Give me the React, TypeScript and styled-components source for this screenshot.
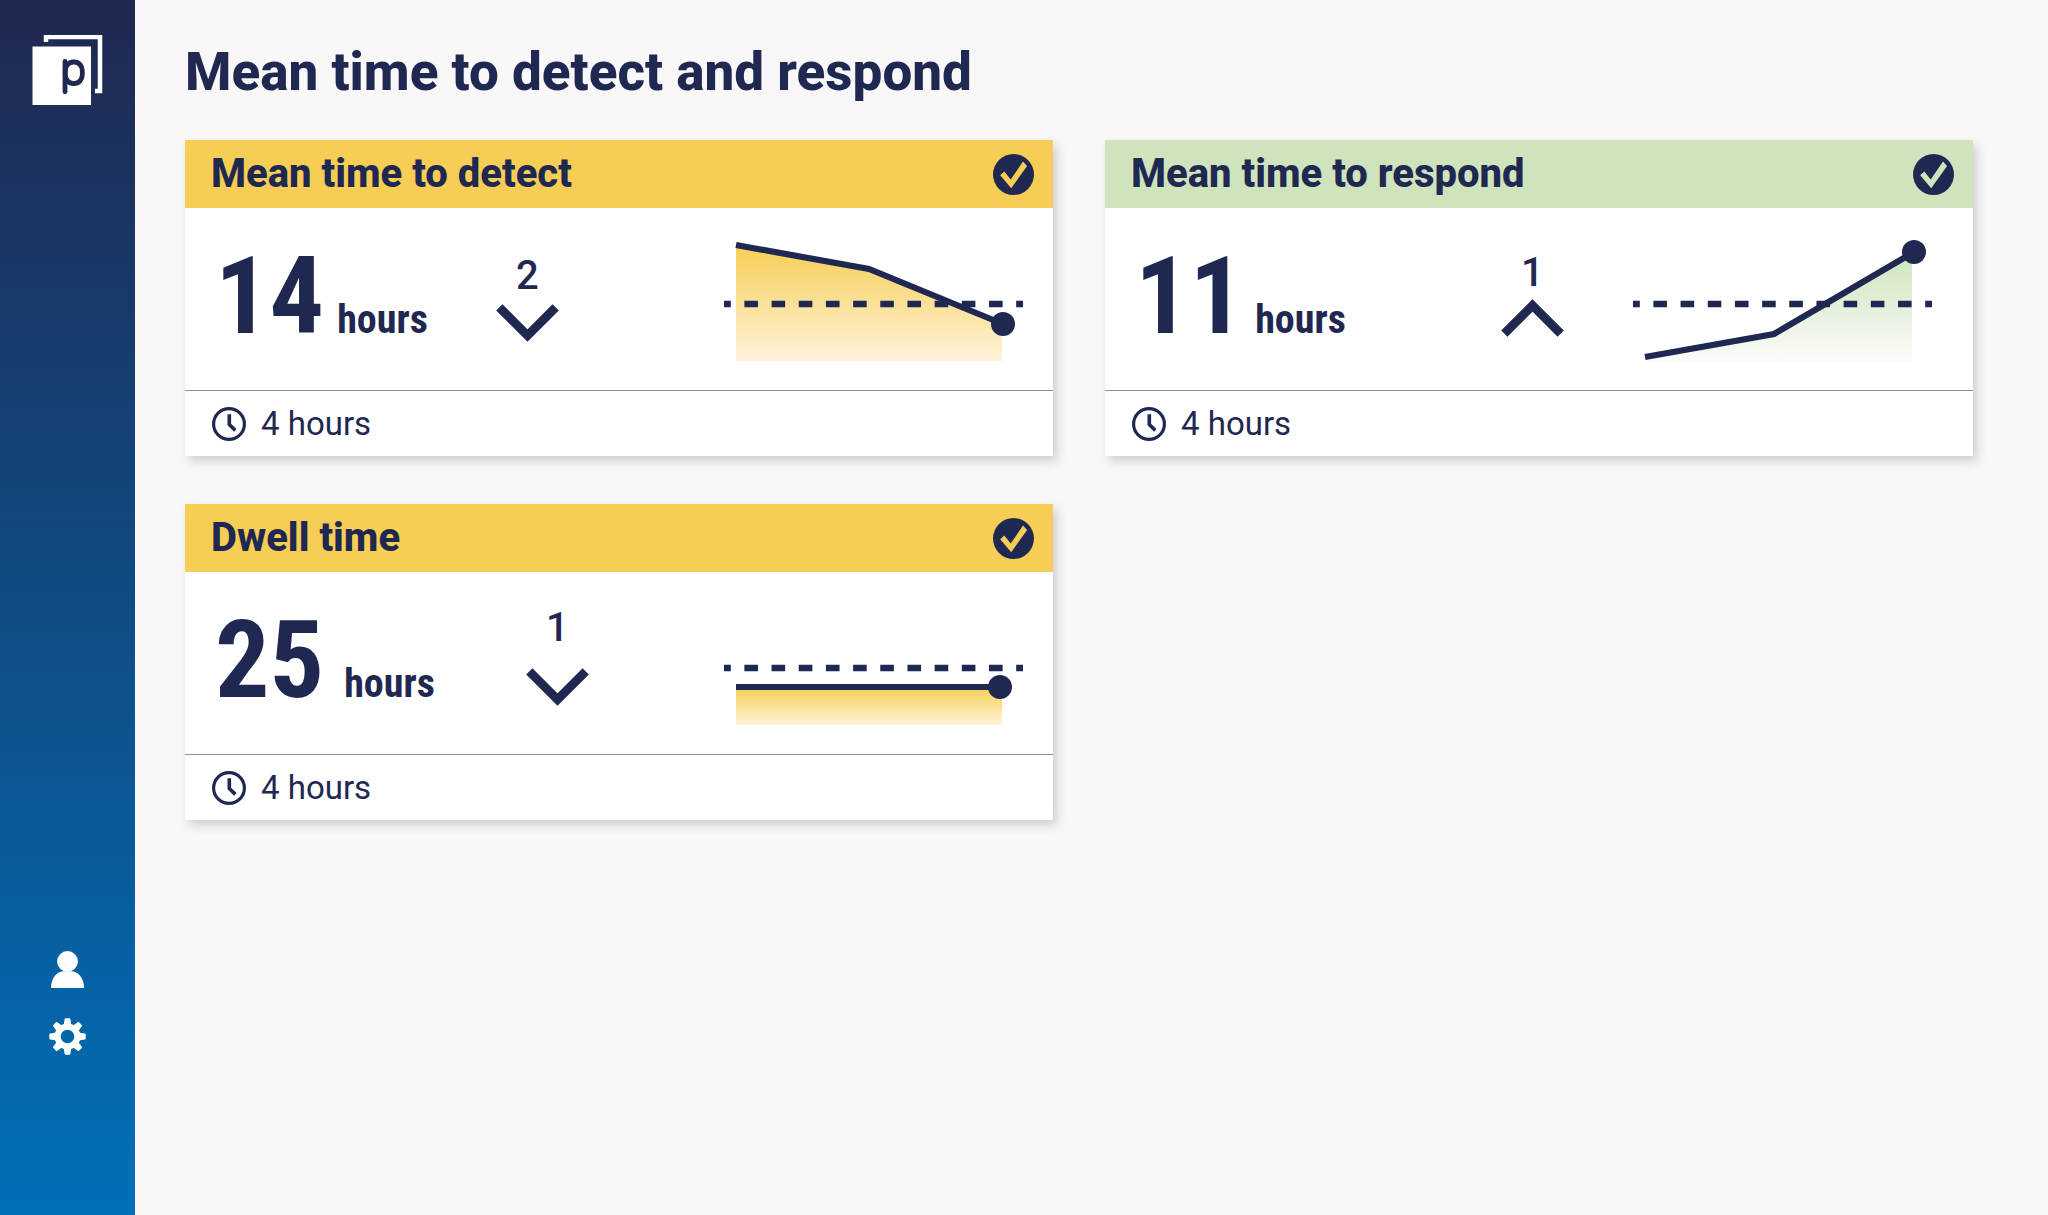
import React from "react";
import styled, { createGlobalStyle } from "styled-components";

const ink = "#1f2851";

const GlobalStyle = createGlobalStyle`
  *, *::before, *::after { box-sizing: border-box; }
  body {
    margin: 0;
    background: #f9f7f8;
    color: ${ink};
    font-family: Roboto, "Liberation Sans", sans-serif;
  }
`;

const Layout = styled.div`
  display: flex;
  min-height: 100vh;
`;

const Sidebar = styled.nav`
  flex: 0 0 135px;
  display: flex;
  flex-direction: column;
  align-items: center;
  justify-content: space-between;
  padding: 35px 0 160px;
  background: linear-gradient(#202850, #0070b9);
`;

const HomeLink = styled.a`
  display: block;
  svg { display: block; }
`;

const SidebarActions = styled.div`
  display: flex;
  flex-direction: column;
  gap: 30px;
`;

const IconButton = styled.button`
  display: block;
  padding: 0;
  border: 0;
  background: none;
  cursor: pointer;
  svg { display: block; }
`;

const Main = styled.main`
  flex: 1;
  min-width: 0;
  padding: 40px 75px 40px 50px;
`;

const PageTitle = styled.h1`
  margin: 0 0 36px;
  font-size: 53px;
  line-height: 64px;
  font-weight: 800;
`;

const CardGrid = styled.div`
  display: grid;
  grid-template-columns: repeat(2, minmax(0, 1fr));
  gap: 48px 52px;
`;

const Card = styled.section`
  background: #fff;
  box-shadow: 4px 5px 10px rgba(0, 0, 0, 0.17);
`;

const CardHeader = styled.header<{ $color: string }>`
  display: flex;
  align-items: center;
  justify-content: space-between;
  height: 68px;
  padding: 0 19px 0 26px;
  background: ${(p) => p.$color};
`;

const CardTitle = styled.h2`
  margin: 0;
  font-size: 40px;
  line-height: 48px;
  font-weight: 800;
`;

const CardBody = styled.div`
  display: flex;
  align-items: flex-start;
  padding: 30px 30px 22px;
`;

const Reading = styled.p<{ $gap: number }>`
  display: flex;
  align-items: baseline;
  gap: ${(p) => p.$gap}px;
  margin: 0;
  font-family: "Roboto Condensed", Roboto, "Liberation Sans", sans-serif;
  font-weight: 700;
`;

const Amount = styled.span`
  min-width: 96px;
  font-size: 108px;
  line-height: 116px;
`;

const Unit = styled.span`
  font-size: 40px;
  line-height: 48px;
`;

const Trend = styled.div<{ $before: number; $gap: number; $height: number }>`
  display: flex;
  flex-direction: column;
  align-items: center;
  justify-content: flex-end;
  gap: ${(p) => p.$gap}px;
  height: ${(p) => p.$height}px;
  margin-left: ${(p) => p.$before}px;
  font-size: 40px;
  line-height: 32px;
  font-weight: 500;
  svg { display: block; }
`;

const ChartSvg = styled.svg`
  display: block;
  flex: none;
  margin-left: auto;
`;

const CardFooter = styled.footer`
  display: flex;
  align-items: center;
  gap: 15px;
  height: 66px;
  padding: 0 27px;
  border-top: 1px solid #8b8fa6;
  font-size: 33px;
  line-height: 40px;
`;

type Point = [number, number];

interface Metric {
  id: string;
  title: string;
  color: string;
  fadeTo: string;
  amount: number;
  unitGap: number;
  change: number;
  direction: "up" | "down";
  trendBefore: number;
  trendGap: number;
  trendHeight: number;
  window: string;
  line: Point[];
  areaEnd: number;
  targetStart: number;
}

const metrics: Metric[] = [
  {
    id: "detect",
    title: "Mean time to detect",
    color: "#f6ce55",
    fadeTo: "#fff3da",
    amount: 14,
    unitGap: 13,
    change: 2,
    direction: "down",
    trendBefore: 68,
    trendGap: 12,
    trendHeight: 104,
    window: "4 hours",
    line: [[23, 7], [156, 31], [290, 86]],
    areaEnd: 289,
    targetStart: 11,
  },
  {
    id: "respond",
    title: "Mean time to respond",
    color: "#cfe4bc",
    fadeTo: "#fbfcfa",
    amount: 11,
    unitGap: 11,
    change: 1,
    direction: "up",
    trendBefore: 155,
    trendGap: 10,
    trendHeight: 99,
    window: "4 hours",
    line: [[12, 119], [141, 96], [281, 14]],
    areaEnd: 279,
    targetStart: 0,
  },
  {
    id: "dwell",
    title: "Dwell time",
    color: "#f6ce55",
    fadeTo: "#fff3da",
    amount: 25,
    unitGap: 20,
    change: 1,
    direction: "down",
    trendBefore: 91,
    trendGap: 24,
    trendHeight: 104,
    window: "4 hours",
    line: [[23, 85], [287, 85]],
    areaEnd: 289,
    targetStart: 11,
  },
];

function Logo() {
  return (
    <svg width="71" height="71" viewBox="0 0 71 71" aria-hidden="true">
      <path d="M14 7V2H68V56H63" fill="none" stroke="#fff" strokeWidth="4.5" />
      <rect x="0.5" y="11.5" width="58.5" height="58.5" fill="#fff" />
      <line x1="33" y1="26.5" x2="33" y2="56.8" stroke={ink} strokeWidth="4.8" strokeLinecap="round" />
      <rect x="33.3" y="27" width="17" height="21.5" rx="8" ry="8.5" fill="none" stroke={ink} strokeWidth="4.8" />
    </svg>
  );
}

function UserIcon() {
  return (
    <svg width="37" height="37" viewBox="0 0 37 37" fill="#fff" aria-hidden="true">
      <circle cx="18.5" cy="10.5" r="10.4" />
      <path d="M2 37C2 27.5 7.5 20.3 15 20.3H22C29.5 20.3 35 27.5 35 37Z" />
    </svg>
  );
}

function GearIcon() {
  const teeth = [0, 45, 90, 135, 180, 225, 270, 315];
  return (
    <svg width="37" height="37" viewBox="0 0 37 37" fill="#fff" aria-hidden="true">
      <circle cx="18.5" cy="18.5" r="9.9" fill="none" stroke="#fff" strokeWidth="6.2" />
      {teeth.map((angle) => (
        <path
          key={angle}
          d="M14.6 7.5L15.6 1.2Q15.7 0.3 16.6 0.3H20.4Q21.3 0.3 21.4 1.2L22.4 7.5Z"
          transform={`rotate(${angle} 18.5 18.5)`}
        />
      ))}
    </svg>
  );
}

function CheckBadge({ color }: { color: string }) {
  return (
    <svg width="41" height="41" viewBox="0 0 41 41" role="img" aria-label="On track">
      <circle cx="20.5" cy="20.5" r="20.5" fill={ink} />
      <path d="M7.2 21.3L11.3 17.6L17.7 25.6L30 7.6L34.1 12L18.2 34.2Z" fill={color} />
    </svg>
  );
}

function Chevron({ direction }: { direction: "up" | "down" }) {
  return (
    <svg width="63" height="38" viewBox="0 0 63 38" role="img" aria-label={direction}>
      <path
        d={direction === "down" ? "M3.3 3.3L31.5 31.5L59.7 3.3" : "M3.3 34.7L31.5 6.5L59.7 34.7"}
        fill="none"
        stroke={ink}
        strokeWidth="8.8"
      />
    </svg>
  );
}

function ClockIcon() {
  return (
    <svg width="34" height="34" viewBox="0 0 34 34" fill="none" stroke={ink} aria-hidden="true">
      <circle cx="17" cy="17" r="15.4" strokeWidth="3.2" />
      <path d="M17.3 7.2V17.6L23.3 23.4" strokeWidth="3.6" />
    </svg>
  );
}

const CHART_BOTTOM = 123;

function TrendChart({ metric }: { metric: Metric }) {
  const { line, areaEnd, targetStart, color, fadeTo, id } = metric;
  const [endX, endY] = line[line.length - 1];
  const points = line.map((p) => p.join(",")).join(" ");
  const top = Math.min(...line.map((p) => p[1]));
  const body = line.slice(0, -1).map((p) => p.join(",")).join(" ");
  const area = `${body} ${areaEnd},${endY} ${areaEnd},${CHART_BOTTOM} ${line[0][0]},${CHART_BOTTOM}`;
  return (
    <ChartSvg width="310" height="130" viewBox="0 0 310 130" role="img" aria-label={`${metric.title} trend`}>
      <defs>
        <linearGradient id={`fill-${id}`} gradientUnits="userSpaceOnUse" x1="0" y1={top} x2="0" y2={CHART_BOTTOM}>
          <stop offset="0" stopColor={color} />
          <stop offset="1" stopColor={fadeTo} />
        </linearGradient>
      </defs>
      <polygon points={area} fill={`url(#fill-${id})`} />
      <line
        x1={targetStart}
        y1="66"
        x2={targetStart + 299}
        y2="66"
        stroke={ink}
        strokeWidth="6.4"
        strokeDasharray="13.6 13.58"
        strokeDashoffset="6.8"
      />
      <polyline points={points} fill="none" stroke={ink} strokeWidth="6.2" />
      <circle cx={endX} cy={endY} r="12" fill={ink} />
    </ChartSvg>
  );
}

function MetricCard({ metric }: { metric: Metric }) {
  return (
    <Card>
      <CardHeader $color={metric.color}>
        <CardTitle>{metric.title}</CardTitle>
        <CheckBadge color={metric.color} />
      </CardHeader>
      <CardBody>
        <Reading $gap={metric.unitGap}>
          <Amount>{metric.amount}</Amount>
          <Unit>hours</Unit>
        </Reading>
        <Trend $before={metric.trendBefore} $gap={metric.trendGap} $height={metric.trendHeight}>
          <span>{metric.change}</span>
          <Chevron direction={metric.direction} />
        </Trend>
        <TrendChart metric={metric} />
      </CardBody>
      <CardFooter>
        <ClockIcon />
        <span>{metric.window}</span>
      </CardFooter>
    </Card>
  );
}

export default function App() {
  return (
    <>
      <GlobalStyle />
      <Layout>
        <Sidebar aria-label="Main">
          <HomeLink href="#" aria-label="Home">
            <Logo />
          </HomeLink>
          <SidebarActions>
            <IconButton type="button" aria-label="Account">
              <UserIcon />
            </IconButton>
            <IconButton type="button" aria-label="Settings">
              <GearIcon />
            </IconButton>
          </SidebarActions>
        </Sidebar>
        <Main>
          <PageTitle>Mean time to detect and respond</PageTitle>
          <CardGrid>
            {metrics.map((metric) => (
              <MetricCard key={metric.id} metric={metric} />
            ))}
          </CardGrid>
        </Main>
      </Layout>
    </>
  );
}
